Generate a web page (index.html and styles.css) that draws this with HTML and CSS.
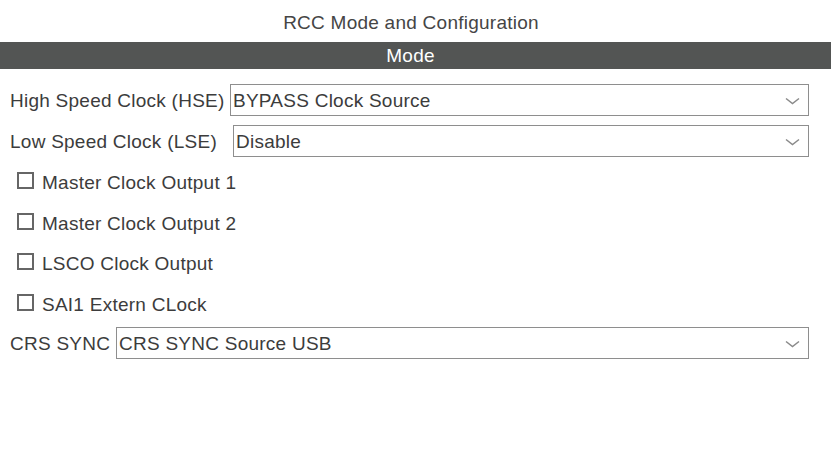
FILE: index.html
```html
<!DOCTYPE html>
<html>
<head>
<meta charset="utf-8">
<link rel="stylesheet" href="styles.css">
</head>
<body>
<div class="title">RCC Mode and Configuration</div>
<div class="bar">Mode</div>
<div class="content">
  <div class="row">
    <span class="label label-hse">High Speed Clock (HSE)</span>
    <div class="select"><span class="value">BYPASS Clock Source</span><svg class="chev" width="15" height="8" viewBox="0 0 15 8"><polyline points="1,1.5 7.5,6.5 14,1.5" fill="none" stroke="#8a8a8a" stroke-width="1.5"/></svg></div>
  </div>
  <div class="row">
    <span class="label label-lse">Low Speed Clock (LSE)</span>
    <div class="select"><span class="value">Disable</span><svg class="chev" width="15" height="8" viewBox="0 0 15 8"><polyline points="1,1.5 7.5,6.5 14,1.5" fill="none" stroke="#8a8a8a" stroke-width="1.5"/></svg></div>
  </div>
  <div class="row check-row">
    <span class="box"></span><span class="check-label">Master Clock Output 1</span>
  </div>
  <div class="row check-row">
    <span class="box"></span><span class="check-label">Master Clock Output 2</span>
  </div>
  <div class="row check-row">
    <span class="box"></span><span class="check-label">LSCO Clock Output</span>
  </div>
  <div class="row check-row">
    <span class="box"></span><span class="check-label">SAI1 Extern CLock</span>
  </div>
  <div class="row">
    <span class="label label-crs">CRS SYNC</span>
    <div class="select"><span class="value">CRS SYNC Source USB</span><svg class="chev" width="15" height="8" viewBox="0 0 15 8"><polyline points="1,1.5 7.5,6.5 14,1.5" fill="none" stroke="#8a8a8a" stroke-width="1.5"/></svg></div>
  </div>
</div>
</body>
</html>
```
FILE: styles.css
```css
html, body {
  margin: 0;
  padding: 0;
  background: #ffffff;
}
body {
  font-family: "Liberation Sans", Arial, sans-serif;
  font-size: 19px;
  letter-spacing: 0.25px;
  color: #3c3c3c;
}
.title {
  box-sizing: border-box;
  height: 42px;
  padding: 3px 9px 0 0;
  display: flex;
  align-items: center;
  justify-content: center;
  color: #454545;
}
.bar {
  box-sizing: border-box;
  height: 27px;
  padding-right: 10px;
  background: #535554;
  color: #ffffff;
  display: flex;
  align-items: center;
  justify-content: center;
}
.content {
  padding: 11px 22px 0 10px;
}
.row {
  height: 40.5px;
  display: flex;
  align-items: center;
}
.label {
  flex: none;
  padding-top: 2px;
  white-space: nowrap;
}
.label-hse { width: 220px; }
.label-lse { width: 223px; }
.label-crs { width: 106px; }
.select {
  flex: 1;
  box-sizing: border-box;
  height: 32px;
  border: 1px solid #8e8e8e;
  display: flex;
  align-items: center;
  justify-content: space-between;
  padding: 0 8px 0 2px;
}
.value {
  padding-top: 2px;
  white-space: nowrap;
}
.chev {
  display: block;
  margin-top: 2px;
}
.check-row {
  padding-left: 7px;
  gap: 8px;
}
.box {
  box-sizing: border-box;
  width: 17px;
  height: 17px;
  border: 2px solid #666666;
  margin-bottom: 1px;
}
.check-label {
  padding-top: 4px;
}
```
